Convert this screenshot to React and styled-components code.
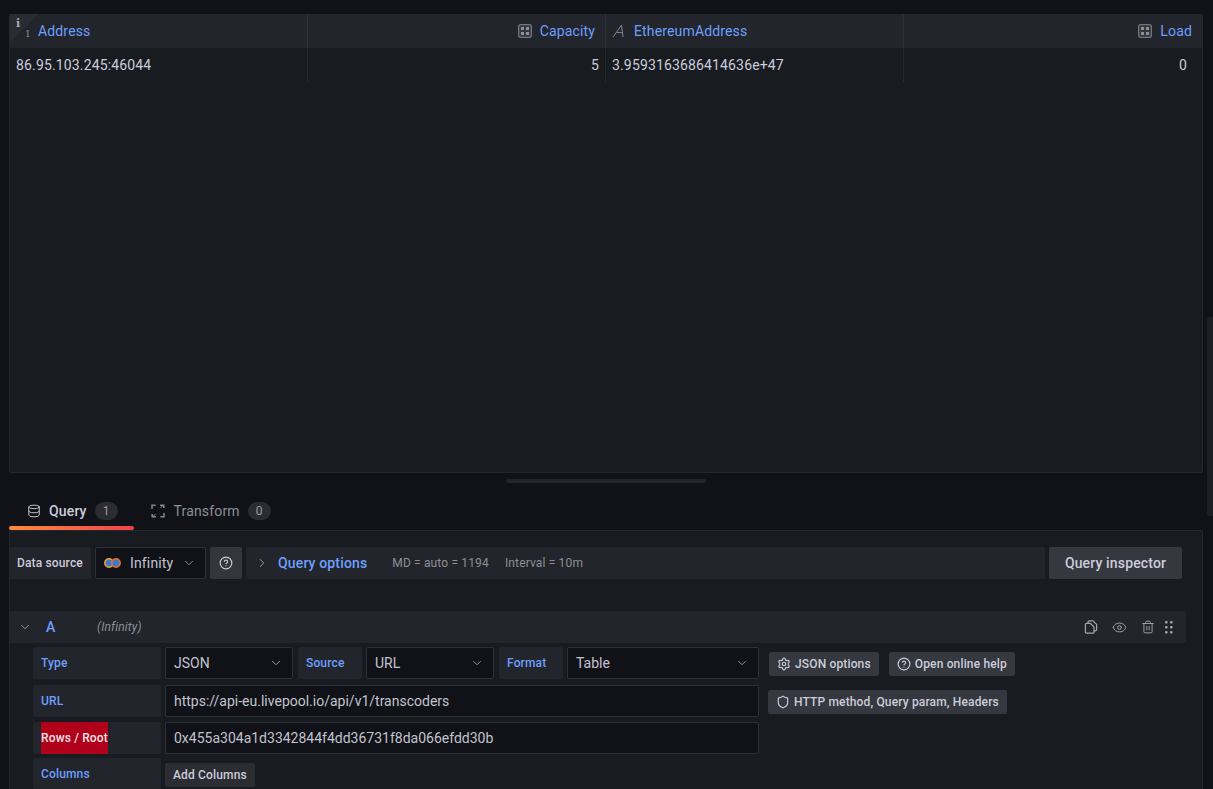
import React from 'react';
import styled, { createGlobalStyle } from 'styled-components';
import { ChevronDown, ChevronRight, Database, Settings, CircleHelp, Shield, Eye, Trash2 } from 'lucide-react';

const GlobalStyle = createGlobalStyle`
  html, body {
    margin: 0;
    height: 100%;
    overflow: hidden;
    background: #111217;
    color: #ccccdc;
    font-family: Roboto, "Liberation Sans", sans-serif;
    font-size: 14px;
    letter-spacing: 0.15px;
  }
`;

const Page = styled.div`
  position: relative;
  height: 789px;
  overflow: hidden;
  padding: 14px 10px 0 9px;
  box-sizing: border-box;
`;

const ScrollThumb = styled.div`
  position: absolute;
  right: 0;
  top: 317px;
  width: 6px;
  height: 199px;
  border-radius: 3px 0 0 3px;
  background: #1c1f24;
`;

const TablePanel = styled.div`
  position: relative;
  height: 459px;
  box-sizing: border-box;
  background: #181b1f;
  border: 1px solid #24272c;
  border-top: 0;
  border-radius: 2px;
`;

const CornerInfo = styled.div`
  position: absolute;
  left: 0;
  top: 0;
  width: 28px;
  height: 28px;
  background: linear-gradient(135deg, #292c32 50%, transparent 50%);
`;

const CornerI = styled.span`
  position: absolute;
  left: 6px;
  top: 4px;
  font-family: "DejaVu Serif", serif;
  font-weight: 700;
  font-size: 11px;
  line-height: 12px;
  color: #a9aab6;
`;

const CornerCount = styled.span`
  position: absolute;
  left: 15px;
  top: 15px;
  font-family: "DejaVu Serif", serif;
  font-size: 9px;
  line-height: 10px;
  color: #8e8f99;
`;

const TableGrid = styled.div`
  display: grid;
  grid-template-columns: 298px 298px 298px 1fr;
`;

const HeadCell = styled.div`
  display: flex;
  align-items: center;
  justify-content: ${props => (props.$right ? 'flex-end' : 'flex-start')};
  gap: 8px;
  height: 34px;
  box-sizing: border-box;
  padding: 0 ${props => (props.$right ? '10px' : '6px')} 0 ${props => (props.$first ? '28px' : '6px')};
  background: #22252b;
  color: #6e9fff;
  border-right: ${props => (props.$last ? '0' : '1px solid #2d3036')};
`;

const BodyCell = styled.div`
  display: flex;
  align-items: center;
  justify-content: ${props => (props.$right ? 'flex-end' : 'flex-start')};
  height: 34px;
  box-sizing: border-box;
  padding: 0 ${props => (props.$last ? '15px' : '6px')} 0 6px;
  border-right: ${props => (props.$last ? '0' : '1px solid #24272c')};
`;

const ResizeBar = styled.div`
  display: flex;
  justify-content: center;
  padding: 6px 0 12px;
`;

const ResizeHandle = styled.div`
  width: 200px;
  height: 4px;
  border-radius: 2px;
  background: #24262b;
`;

const Tabs = styled.div`
  display: flex;
  height: 35px;
`;

const Tab = styled.div`
  position: relative;
  display: flex;
  align-items: flex-start;
  padding: 7px ${props => (props.$active ? '16px' : '0')} 0 ${props => (props.$active ? '18px' : '17px')};
  color: ${props => (props.$active ? '#ccccdc' : '#8e8f99')};
  font-weight: ${props => (props.$active ? 500 : 400)};
  line-height: 18px;

  &::after {
    content: ${props => (props.$active ? "''" : 'none')};
    position: absolute;
    left: 0;
    right: 0;
    bottom: 0;
    height: 4px;
    border-radius: 2px;
    background: linear-gradient(90deg, #ff8a3d, #f0424c);
  }
`;

const TabIcon = styled.span`
  display: flex;
  margin-top: 2px;
`;

const TabLabel = styled.span`
  margin-left: ${props => props.$gap}px;
`;

const Badge = styled.span`
  display: inline-flex;
  align-items: center;
  justify-content: center;
  width: 23px;
  height: 18px;
  margin-left: 8px;
  border-radius: 9px;
  background: #2b2d32;
  color: #9a9ba5;
  font-size: 12px;
  font-weight: 400;
`;

const EditorPanel = styled.div`
  background: #181b1f;
  border: 1px solid #24272c;
  border-bottom: 0;
  border-radius: 2px 2px 0 0;
  padding: 16px 16px 0 0;
  height: 300px;
  box-sizing: border-box;
`;

const SourceRow = styled.div`
  display: flex;
  gap: 4px;
  height: 32px;
  margin-bottom: 32px;
  margin-left: -1px;
`;

const Label = styled.div`
  display: flex;
  align-items: center;
  flex: none;
  width: ${props => props.$width}px;
  height: 32px;
  box-sizing: border-box;
  margin-left: ${props => props.$offset || 0}px;
  padding: 0 8px;
  border-radius: 2px;
  background: #22252b;
  color: ${props => (props.$plain ? '#ccccdc' : '#6e9fff')};
  font-size: 12px;
  font-weight: 500;
`;

const Alert = styled.span`
  width: 67px;
  height: 32px;
  line-height: 32px;
  background: #b0001a;
  color: #f4e4e6;
  white-space: nowrap;
`;

const Field = styled.div`
  display: flex;
  align-items: center;
  justify-content: space-between;
  flex: none;
  width: ${props => props.$width}px;
  height: 32px;
  box-sizing: border-box;
  padding: 0 9px 0 8px;
  border: 1px solid #2d3036;
  border-radius: 2px;
  background: #111217;
  color: #c2c3d0;
  letter-spacing: 0;
  svg { color: #9a9ba5; }
`;

const LogoValue = styled.span`
  display: flex;
  align-items: center;
  gap: 9px;
  letter-spacing: 0.15px;
`;

const IconSquare = styled.div`
  display: flex;
  align-items: center;
  justify-content: center;
  width: 32px;
  height: 32px;
  border-radius: 2px;
  background: #33363c;
  color: #ccccdc;
`;

const OptionsBar = styled.div`
  display: flex;
  align-items: center;
  flex: none;
  width: 799px;
  box-sizing: border-box;
  padding-left: 9px;
  border-radius: 2px;
  background: #22252b;
  color: #9a9ba5;
`;

const OptionsTitle = styled.span`
  margin: 0 25px 0 9px;
  color: #6e9fff;
  font-weight: 500;
`;

const OptionsMeta = styled.span`
  margin-right: 16px;
  font-size: 12px;
  color: #8e8f99;
`;

const InspectorButton = styled.div`
  display: flex;
  align-items: center;
  justify-content: center;
  width: 133px;
  border-radius: 2px;
  background: #35383e;
  color: #ccccdc;
  font-weight: 500;
`;

const QueryHeader = styled.div`
  display: flex;
  align-items: center;
  height: 32px;
  margin-left: -1px;
  padding: 0 12px 0 9px;
  border-radius: 2px;
  background: #22252b;
  color: #9a9ba5;
`;

const RefId = styled.span`
  width: 51px;
  margin-left: 14px;
  color: #6e9fff;
  font-weight: 500;
`;

const SourceName = styled.span`
  flex: 1;
  font-size: 12px;
  font-style: italic;
  color: #8e8f99;
`;

const HeaderActions = styled.div`
  display: flex;
  align-items: center;
  gap: 14px;
`;

const DragSlot = styled.span`
  display: flex;
  margin-left: -5px;
`;

const FormBody = styled.div`
  padding: 4px 0 0 23px;
`;

const FormRow = styled.div`
  display: flex;
  align-items: center;
  gap: 4px;
  margin-bottom: ${props => props.$after}px;
`;

const SideButton = styled.div`
  display: flex;
  align-items: center;
  gap: 4px;
  height: 24px;
  box-sizing: border-box;
  margin: 2px 0 0 ${props => props.$offset}px;
  padding: 0 8px;
  border-radius: 2px;
  background: #35383e;
  color: #ccccdc;
  font-size: 12px;
  font-weight: 500;
`;

const AddButton = styled.div`
  display: flex;
  align-items: center;
  height: 24px;
  margin-top: 2px;
  padding: 0 8px;
  border-radius: 2px;
  background: #2b2d32;
  color: #ccccdc;
  font-size: 12px;
  font-weight: 500;
`;

const NumberIcon = () => (
  <svg width="14" height="14" viewBox="0 0 14 14" fill="none">
    <rect x="0.65" y="0.65" width="12.7" height="12.7" rx="2" fill="#34363c" stroke="#74757e" strokeWidth="1.3" />
    <rect x="3" y="3" width="3" height="3" fill="#8e8f99" />
    <rect x="8" y="3" width="3" height="3" fill="#8e8f99" />
    <rect x="3" y="8" width="3" height="3" fill="#8e8f99" />
    <rect x="8" y="8" width="3" height="3" fill="#8e8f99" />
  </svg>
);

const StringIcon = () => (
  <svg width="14" height="14" viewBox="0 0 14 14" fill="none" stroke="#85868f" strokeWidth="1">
    <path d="M1 13 L9.5 1.2 L11 13 M4.5 8.6 H10.6" />
  </svg>
);

const TransformIcon = () => (
  <svg width="14" height="14" viewBox="0 0 14 14" fill="none" stroke="#85868f" strokeWidth="1.5">
    <path d="M1 5V1.2H4.6" />
    <path d="M9 1.2H12.8V4" />
    <path d="M9.5 3.6L12.8 1.2" strokeWidth="1" />
    <path d="M13 9V12.8H9.4" />
    <path d="M5 12.8H1.2V10" />
    <path d="M4.5 10.4L1.2 12.8" strokeWidth="1" />
  </svg>
);

const InfinityLogo = () => (
  <svg width="17" height="10" viewBox="0 0 17 10">
    <circle cx="5" cy="5" r="4.2" fill="#3f77c9" stroke="#f0a22e" strokeWidth="1.5" />
    <circle cx="12" cy="5" r="4.2" fill="#3f77c9" stroke="#e8702e" strokeWidth="1.5" />
  </svg>
);

const CopyIcon = () => (
  <svg width="14" height="14" viewBox="0 0 14 14" fill="none" stroke="#a3a4ae" strokeWidth="1.2" strokeLinejoin="round">
    <path d="M4 3.5 V2 A1.2 1.2 0 0 1 5.2 0.8 H9 L12.6 4.4 V9.6 A1.2 1.2 0 0 1 11.4 10.8 H10" />
    <path d="M1.4 4.6 A1.2 1.2 0 0 1 2.6 3.4 H6.4 L10 7 V12 A1.2 1.2 0 0 1 8.8 13.2 H2.6 A1.2 1.2 0 0 1 1.4 12 Z" />
  </svg>
);

const DragIcon = () => (
  <svg width="10" height="14" viewBox="0 0 10 14" fill="#a3a4ae">
    <rect x="1" y="1" width="2.6" height="2.6" rx="1" />
    <rect x="6" y="1" width="2.6" height="2.6" rx="1" />
    <rect x="1" y="6" width="2.6" height="2.6" rx="1" />
    <rect x="6" y="6" width="2.6" height="2.6" rx="1" />
    <rect x="1" y="11" width="2.6" height="2.6" rx="1" />
    <rect x="6" y="11" width="2.6" height="2.6" rx="1" />
  </svg>
);

const columns = [
  { name: 'Address', value: '86.95.103.245:46044', first: true },
  { name: 'Capacity', value: '5', right: true, icon: <NumberIcon /> },
  { name: 'EthereumAddress', value: '3.9593163686414636e+47', icon: <StringIcon /> },
  { name: 'Load', value: '0', right: true, last: true, icon: <NumberIcon /> },
];

const Chevron = () => <ChevronDown size={14} strokeWidth={1.6} />;

const App = () => (
  <>
    <GlobalStyle />
    <Page>
      <ScrollThumb />
      <TablePanel>
        <TableGrid>
          {columns.map(col => (
            <HeadCell key={col.name} $right={col.right} $first={col.first} $last={col.last}>
              {col.icon}
              {col.name}
            </HeadCell>
          ))}
          {columns.map(col => (
            <BodyCell key={col.name} $right={col.right} $last={col.last}>
              {col.value}
            </BodyCell>
          ))}
        </TableGrid>
        <CornerInfo>
          <CornerI>i</CornerI>
          <CornerCount>1</CornerCount>
        </CornerInfo>
      </TablePanel>

      <ResizeBar>
        <ResizeHandle />
      </ResizeBar>

      <Tabs>
        <Tab $active>
          <TabIcon><Database size={14} strokeWidth={1.6} /></TabIcon>
          <TabLabel $gap={8}>Query</TabLabel>
          <Badge>1</Badge>
        </Tab>
        <Tab>
          <TabIcon><TransformIcon /></TabIcon>
          <TabLabel $gap={9}>Transform</TabLabel>
          <Badge>0</Badge>
        </Tab>
      </Tabs>

      <EditorPanel>
        <SourceRow>
          <Label $width={82} $plain>Data source</Label>
          <Field $width={111}>
            <LogoValue><InfinityLogo />Infinity</LogoValue>
            <Chevron />
          </Field>
          <IconSquare><CircleHelp size={14} /></IconSquare>
          <OptionsBar>
            <ChevronRight size={14} strokeWidth={1.6} color="#a3a4ae" />
            <OptionsTitle>Query options</OptionsTitle>
            <OptionsMeta>MD = auto = 1194</OptionsMeta>
            <OptionsMeta>Interval = 10m</OptionsMeta>
          </OptionsBar>
          <InspectorButton>Query inspector</InspectorButton>
        </SourceRow>

        <QueryHeader>
          <Chevron />
          <RefId>A</RefId>
          <SourceName>(Infinity)</SourceName>
          <HeaderActions>
            <CopyIcon />
            <Eye size={15} strokeWidth={1.6} color="#a3a4ae" />
            <Trash2 size={14} strokeWidth={1.6} color="#a3a4ae" />
            <DragSlot><DragIcon /></DragSlot>
          </HeaderActions>
        </QueryHeader>

        <FormBody>
          <FormRow $after={6}>
            <Label $width={128}>Type</Label>
            <Field $width={128}>JSON<Chevron /></Field>
            <Label $width={64} $offset={1}>Source</Label>
            <Field $width={128}>URL<Chevron /></Field>
            <Label $width={64} $offset={1}>Format</Label>
            <Field $width={192}>Table<Chevron /></Field>
            <SideButton $offset={6}><Settings size={14} />JSON options</SideButton>
            <SideButton $offset={6}><CircleHelp size={14} />Open online help</SideButton>
          </FormRow>
          <FormRow $after={5}>
            <Label $width={128}>URL</Label>
            <Field $width={594}>https://api-eu.livepool.io/api/v1/transcoders</Field>
            <SideButton $offset={5}><Shield size={14} />HTTP method, Query param, Headers</SideButton>
          </FormRow>
          <FormRow $after={4}>
            <Label $width={128}><Alert>Rows / Root</Alert></Label>
            <Field $width={594}>0x455a304a1d3342844f4dd36731f8da066efdd30b</Field>
          </FormRow>
          <FormRow $after={0}>
            <Label $width={128}>Columns</Label>
            <AddButton>Add Columns</AddButton>
          </FormRow>
        </FormBody>
      </EditorPanel>
    </Page>
  </>
);

export default App;
